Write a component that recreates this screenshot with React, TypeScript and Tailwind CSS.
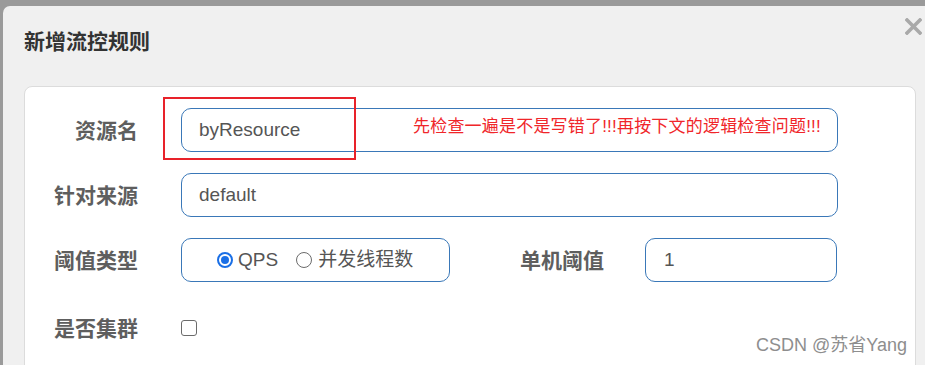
import React from 'react';

const font = { fontFamily: '"Liberation Sans", "Noto Sans CJK SC", sans-serif' };

function Label({ text, className = '' }: { text: string; className?: string }) {
  return (
    <div
      className={`shrink-0 text-right text-[21px] font-bold leading-[30px] text-[#5e5e5e] mt-[8px] ${className}`}
    >
      {text}
    </div>
  );
}

function Radio({ checked }: { checked?: boolean }) {
  if (checked) {
    return (
      <span className="flex h-[16px] w-[16px] shrink-0 items-center justify-center rounded-full border-2 border-[#1a6fe6] bg-white">
        <span className="h-[8px] w-[8px] rounded-full bg-[#1a6fe6]" />
      </span>
    );
  }
  return <span className="block h-[16px] w-[16px] shrink-0 rounded-full border border-[#6b6b6b] bg-white" />;
}

export default function App() {
  return (
    <div className="relative h-[365px] w-[925px] overflow-hidden bg-[#9a9a9a] pl-[3px] pt-[6px]" style={font}>
      <div className="h-[400px] w-[940px] rounded-tl-[7px] bg-[#f0f0f0]">
        {/* header */}
        <div className="flex h-[80px] items-start justify-between pl-[21px] pr-[21px] pt-[21px]">
          <h4 className="text-[21px] font-bold leading-[30px] text-[#333]">新增流控规则</h4>
          <svg width="17" height="17" viewBox="0 0 17 17" className="mt-[-9px]">
            <path d="M2 2 L15 15 M15 2 L2 15" stroke="#a9a9a9" strokeWidth="3.6" strokeLinecap="square" />
          </svg>
        </div>

        {/* form card */}
        <div className="ml-[21px] h-[320px] w-[892px] rounded-[8px] border border-[#dcdcdc] bg-white pt-[21px]">
          <div className="flex h-[44px] items-start">
            <Label text="资源名" className="w-[113px]" />
            <div className="relative ml-[43px] flex h-[44px] w-[657px] items-center rounded-[10px] border border-[#3a78b8] px-[17px] text-[19px] text-[#555]">
              byResource
              <span className="absolute left-[231px] top-[7px] text-[17px] leading-[22px] tracking-[0.2px] text-[#f0262a]">
                先检查一遍是不是写错了!!!再按下文的逻辑检查问题!!!
              </span>
            </div>
          </div>

          <div className="mt-[21px] flex h-[44px] items-start">
            <Label text="针对来源" className="w-[113px]" />
            <div className="ml-[43px] flex h-[44px] w-[657px] items-center rounded-[10px] border border-[#3a78b8] px-[17px] text-[19px] text-[#555]">
              default
            </div>
          </div>

          <div className="mt-[21px] flex h-[44px] items-start">
            <Label text="阈值类型" className="w-[113px]" />
            <div className="ml-[43px] flex h-[44px] w-[269px] items-center rounded-[10px] border border-[#3a78b8] pl-[35px] text-[19px] text-[#555]">
              <Radio checked />
              <span className="ml-[5px]">QPS</span>
              <span className="ml-[18px] block">
                <Radio />
              </span>
              <span className="ml-[6px]">并发线程数</span>
            </div>
            <Label text="单机阈值" className="ml-[70px]" />
            <div className="ml-[41px] flex h-[44px] w-[192px] items-center rounded-[10px] border border-[#3a78b8] px-[18px] text-[19px] text-[#555]">
              1
            </div>
          </div>

          <div className="mt-[24px] flex h-[44px] items-start">
            <Label text="是否集群" className="w-[113px]" />
            <div className="ml-[43px] mt-[14px] h-[16px] w-[16px] rounded-[3px] border-[1.5px] border-[#6b6b6b]" />
          </div>
        </div>
      </div>

      {/* annotation box */}
      <div className="absolute left-[163px] top-[97px] h-[63px] w-[193px] border-2 border-[#e8222a]" />

      {/* watermark */}
      <div className="absolute left-[756px] top-[332px] text-[18px] leading-[26px] text-[#8e8e8e]">CSDN @苏省Yang</div>
    </div>
  );
}
